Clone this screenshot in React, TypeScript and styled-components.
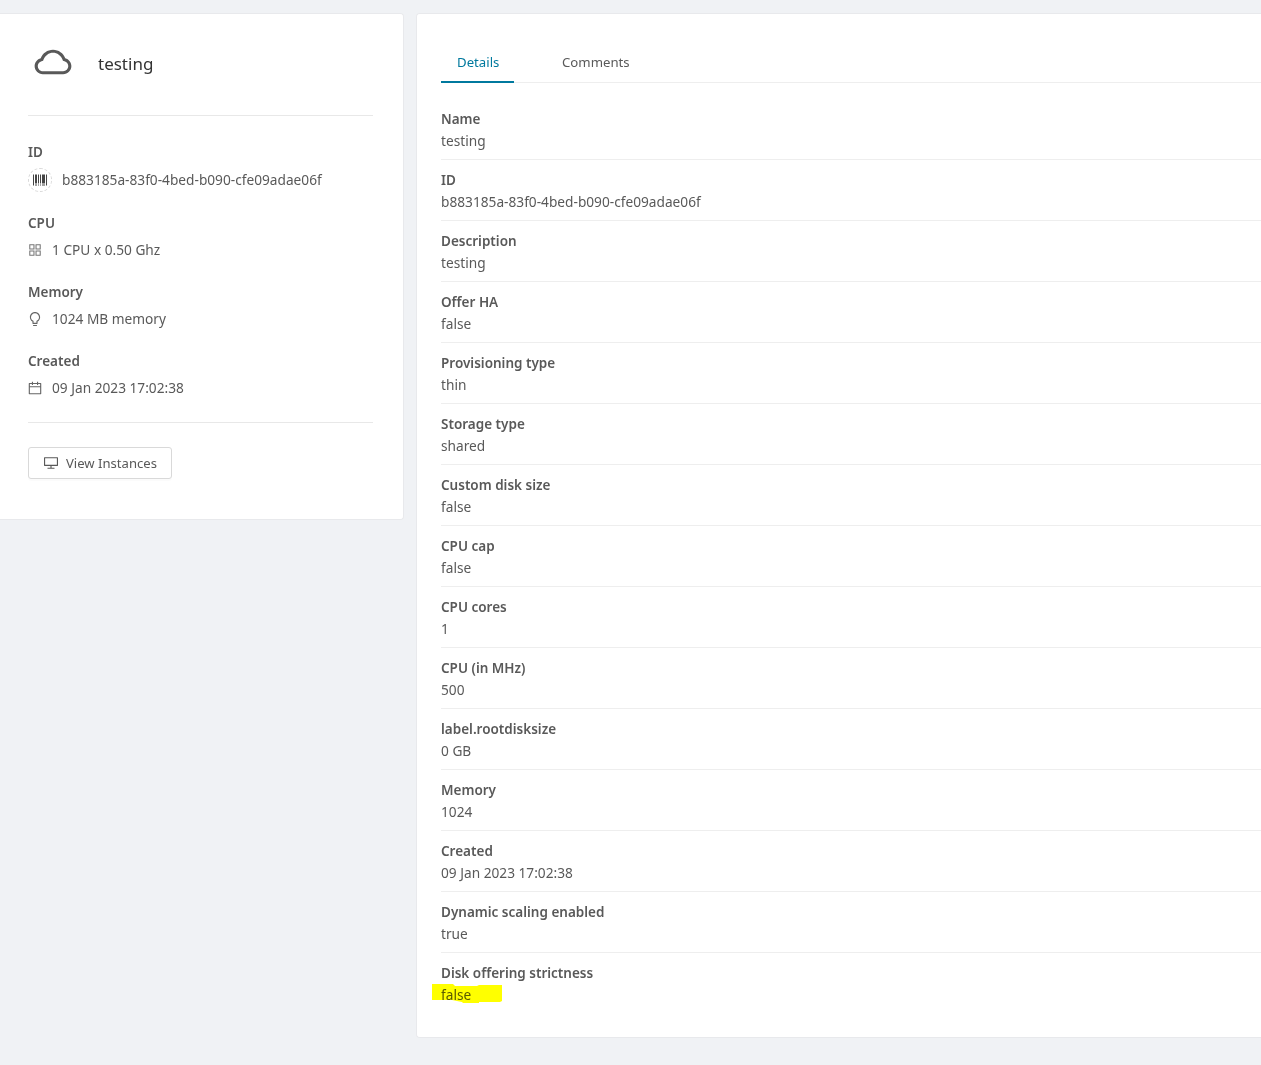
import * as React from "react";
import styled, { createGlobalStyle } from "styled-components";
import {
  AiOutlineAppstore,
  AiOutlineBarcode,
  AiOutlineBulb,
  AiOutlineCalendar,
  AiOutlineCloud,
  AiOutlineDesktop,
} from "react-icons/ai";

const ID = "b883185a-83f0-4bed-b090-cfe09adae06f";
const CREATED = "09 Jan 2023 17:02:38";

const details: { label: string; value: string }[] = [
  { label: "Name", value: "testing" },
  { label: "ID", value: ID },
  { label: "Description", value: "testing" },
  { label: "Offer HA", value: "false" },
  { label: "Provisioning type", value: "thin" },
  { label: "Storage type", value: "shared" },
  { label: "Custom disk size", value: "false" },
  { label: "CPU cap", value: "false" },
  { label: "CPU cores", value: "1" },
  { label: "CPU (in MHz)", value: "500" },
  { label: "label.rootdisksize", value: "0 GB" },
  { label: "Memory", value: "1024" },
  { label: "Created", value: CREATED },
  { label: "Dynamic scaling enabled", value: "true" },
  { label: "Disk offering strictness", value: "false" },
];

const App: React.FC = () => {
  return (
    <>
      <GlobalStyle />
      <Page>
        <InfoCard>
          <Header>
            <CloudIcon size={42} color="#595959" />
            <Title>testing</Title>
          </Header>
          <Divider />
          <InfoBlock>
            <InfoLabel>ID</InfoLabel>
            <InfoValue $tall>
              <Avatar>
                <AiOutlineBarcode size={16} color="#444" />
              </Avatar>
              <span>{ID}</span>
            </InfoValue>
          </InfoBlock>
          <InfoBlock>
            <InfoLabel>CPU</InfoLabel>
            <InfoValue>
              <AiOutlineAppstore size={16} color="#777" />
              <span>1 CPU x 0.50 Ghz</span>
            </InfoValue>
          </InfoBlock>
          <InfoBlock>
            <InfoLabel>Memory</InfoLabel>
            <InfoValue>
              <AiOutlineBulb size={16} color="#666" />
              <span>1024 MB memory</span>
            </InfoValue>
          </InfoBlock>
          <InfoBlock>
            <InfoLabel>Created</InfoLabel>
            <InfoValue>
              <AiOutlineCalendar size={16} color="#666" />
              <span>{CREATED}</span>
            </InfoValue>
          </InfoBlock>
          <Divider $spaced />
          <ViewButton>
            <AiOutlineDesktop size={16} color="#595959" />
            <span>View Instances</span>
          </ViewButton>
        </InfoCard>
        <DetailsCard>
          <Tabs>
            <Tab $active>Details</Tab>
            <Tab>Comments</Tab>
          </Tabs>
          {details.map((row, i) => (
            <Row key={row.label}>
              <RowLabel>{row.label}</RowLabel>
              <RowValue>{row.value}</RowValue>
              {i === details.length - 1 && (
                <Highlight viewBox="0 0 70 19" aria-hidden="true">
                  <path d="M0 0 H21 L23 2 H45 L47 1 H70 V17 L68 18 H47 V19 H31 L30 18 L20 16 H0 Z" />
                </Highlight>
              )}
            </Row>
          ))}
        </DetailsCard>
      </Page>
    </>
  );
};

export default App;

const GlobalStyle = createGlobalStyle`
  html, body {
    margin: 0;
    padding: 0;
    background: #f0f2f5;
    overflow: hidden;
  }
  body {
    font-family: "Noto Sans", "Open Sans", sans-serif;
    font-size: 13.7px;
    color: #595959;
  }
`;

const Page = styled.div`
  display: grid;
  grid-template-columns: 404px 1fr;
  column-gap: 12px;
  align-items: start;
  padding-top: 13px;
  height: 1052px;
  margin-right: -40px;
`;

const InfoCard = styled.section`
  box-sizing: border-box;
  height: 507px;
  padding: 0 31px 0 28px;
  background: #fff;
  border-radius: 0 4px 4px 0;
  box-shadow: inset -1px 0 0 #e8e9ec, inset 0 1px 0 #e8e9ec, inset 0 -1px 0 #e8e9ec;
`;

const Header = styled.div`
  display: flex;
  align-items: center;
  gap: 24px;
  height: 102px;
  padding-left: 4px;
`;

const CloudIcon = styled(AiOutlineCloud)`
  margin-top: -4px;
`;

const Title = styled.h1`
  margin: -2px 0 0;
  font-size: 17px;
  font-weight: 400;
  color: #333;
`;

const Divider = styled.div<{ $spaced?: boolean }>`
  height: 1px;
  background: #e8e8e8;
  margin-top: ${(p) => (p.$spaced ? "24px" : "0")};
  margin-bottom: ${(p) => (p.$spaced ? "24px" : "26px")};
`;

const InfoBlock = styled.div`
  margin-bottom: 22px;
`;

const InfoLabel = styled.div`
  font-size: 13.5px;
  font-weight: 650;
  line-height: 20px;
  color: #595959;
`;

const InfoValue = styled.div<{ $tall?: boolean }>`
  display: flex;
  align-items: center;
  gap: ${(p) => (p.$tall ? "10px" : "9px")};
  height: ${(p) => (p.$tall ? "24px" : "20px")};
  margin-top: ${(p) => (p.$tall ? "6px" : "7px")};
  margin-bottom: ${(p) => (p.$tall ? "-1px" : "0")};
  line-height: 20px;
  > svg {
    margin-left: -1px;
  }
`;

const Avatar = styled.span`
  display: inline-flex;
  align-items: center;
  justify-content: center;
  box-sizing: border-box;
  width: 24px;
  height: 24px;
  border: 1px dashed #d9d9d9;
  border-radius: 50%;
`;

const ViewButton = styled.button`
  display: inline-flex;
  align-items: center;
  gap: 7px;
  box-sizing: border-box;
  width: 144px;
  height: 32px;
  padding: 0 0 0 14px;
  background: #fff;
  border: 1px solid #d9d9d9;
  border-radius: 3px;
  box-shadow: 0 2px 0 rgba(0, 0, 0, 0.015);
  font: inherit;
  font-size: 13.1px;
  color: #595959;
  white-space: nowrap;
`;

const DetailsCard = styled.section`
  box-sizing: border-box;
  height: 1025px;
  padding: 25px 0 0 25px;
  background: #fff;
  border-radius: 4px 0 0 4px;
  box-shadow: inset 1px 0 0 #e8e9ec, inset 0 1px 0 #e8e9ec, inset 0 -1px 0 #e8e9ec;
`;

const Tabs = styled.div`
  display: flex;
  gap: 32px;
  box-sizing: border-box;
  height: 45px;
  margin-bottom: 16px;
  border-bottom: 1px solid #eee;
`;

const Tab = styled.div<{ $active?: boolean }>`
  box-sizing: border-box;
  width: ${(p) => (p.$active ? "73px" : "auto")};
  height: 45px;
  padding: 0 16px;
  font-size: 13.2px;
  line-height: 48px;
  color: ${(p) => (p.$active ? "#00799e" : "#595959")};
  border-bottom: 2px solid ${(p) => (p.$active ? "#00799e" : "transparent")};
`;

const Row = styled.div`
  position: relative;
  box-sizing: border-box;
  height: 61px;
  padding-top: 10px;
  border-bottom: 1px solid #eee;
  &:first-of-type {
    height: 60px;
  }
  &:last-child {
    border-bottom: none;
  }
`;

const RowLabel = styled.div`
  font-size: 13.5px;
  font-weight: 650;
  line-height: 20px;
  color: #595959;
`;

const RowValue = styled.div`
  line-height: 24px;
`;

const Highlight = styled.svg`
  position: absolute;
  left: -9px;
  top: 31px;
  width: 70px;
  height: 19px;
  fill: #ffff00;
  mix-blend-mode: multiply;
`;
